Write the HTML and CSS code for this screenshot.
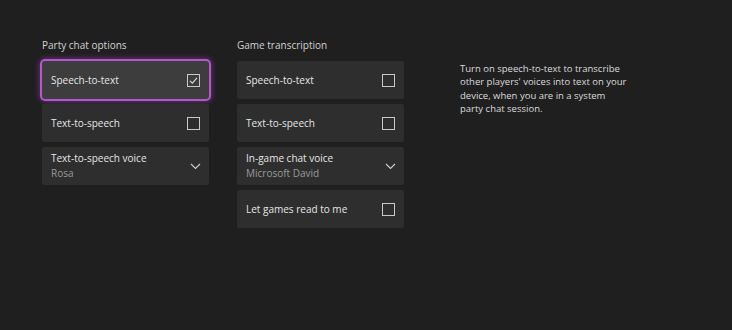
FILE: index.html
```html
<!DOCTYPE html>
<html lang="en">
<head>
    <meta charset="UTF-8">
    <meta name="viewport" content="width=device-width, initial-scale=1.0">
    <title>Speech</title>
    <link rel="stylesheet" href="styles.css">
</head>
<body>
    <div class="settings">
        <div class="column">
            <h2 class="column-title">Party chat options</h2>
            <div class="tile focused">
                <span class="tile-label">Speech-to-text</span>
                <span class="check checked">
                    <svg width="11" height="11" viewBox="0 0 11 11"><polyline points="2,5.8 4.4,8.2 9,2.8" fill="none" stroke="#d8d8d8" stroke-width="1.2"/></svg>
                </span>
            </div>
            <div class="tile">
                <span class="tile-label">Text-to-speech</span>
                <span class="check"></span>
            </div>
            <div class="tile">
                <div class="tile-text">
                    <span class="tile-label">Text-to-speech voice</span>
                    <span class="tile-value">Rosa</span>
                </div>
                <svg class="chevron" width="11" height="7" viewBox="0 0 11 7"><polyline points="1,1 5.5,5.5 10,1" fill="none" stroke="#cfcfcf" stroke-width="1.1"/></svg>
            </div>
        </div>

        <div class="column">
            <h2 class="column-title">Game transcription</h2>
            <div class="tile">
                <span class="tile-label">Speech-to-text</span>
                <span class="check"></span>
            </div>
            <div class="tile">
                <span class="tile-label">Text-to-speech</span>
                <span class="check"></span>
            </div>
            <div class="tile">
                <div class="tile-text">
                    <span class="tile-label">In-game chat voice</span>
                    <span class="tile-value">Microsoft David</span>
                </div>
                <svg class="chevron" width="11" height="7" viewBox="0 0 11 7"><polyline points="1,1 5.5,5.5 10,1" fill="none" stroke="#cfcfcf" stroke-width="1.1"/></svg>
            </div>
            <div class="tile">
                <span class="tile-label">Let games read to me</span>
                <span class="check"></span>
            </div>
        </div>

        <p class="description">
            Turn on speech-to-text to transcribe other players' voices into text on your device, when you are in a system party chat session.
        </p>
    </div>
</body>
</html>
```
FILE: styles.css
```css
body {
    margin: 0;
    padding: 0;
    background-color: #1f1f1f;
    font-family: "Open Sans", "Noto Sans", sans-serif;
    color: #e4e4e4;
    height: 330px;
    overflow: hidden;
}

.settings {
    display: flex;
    padding: 38px 0 0 42px;
}

.column {
    display: flex;
    flex-direction: column;
    gap: 5px;
    width: 167px;
    margin-right: 28px;
}

.column-title {
    margin: 0 0 4px 0;
    font-size: 10px;
    font-weight: 400;
    line-height: 14px;
    color: #d2d2d2;
}

.tile {
    display: flex;
    align-items: center;
    justify-content: space-between;
    height: 38px;
    box-sizing: border-box;
    padding: 0 8px 0 9px;
    background-color: #2e2e2e;
    border-radius: 2px;
}

.tile.focused {
    background-color: #3d3d3d;
    outline: 2px solid #b656cf;
    box-shadow: 0 0 6px 2px rgba(176, 70, 210, 0.6);
    border-radius: 3px;
}

.tile-text {
    display: flex;
    flex-direction: column;
}

.tile-label {
    font-size: 10px;
    line-height: 15px;
    color: #e6e6e6;
}

.tile-value {
    font-size: 10px;
    line-height: 15px;
    color: #9a9a9a;
}

.check {
    display: flex;
    align-items: center;
    justify-content: center;
    width: 13px;
    height: 13px;
    box-sizing: border-box;
    border: 1.5px solid #c9c9c9;
    margin-right: 1px;
}

.check svg {
    flex: none;
}

.chevron {
    margin-right: 0;
}

.description {
    margin: 24px 0 0 28px;
    width: 168px;
    font-size: 9.5px;
    line-height: 13.4px;
    color: #dcdcdc;
}
```
